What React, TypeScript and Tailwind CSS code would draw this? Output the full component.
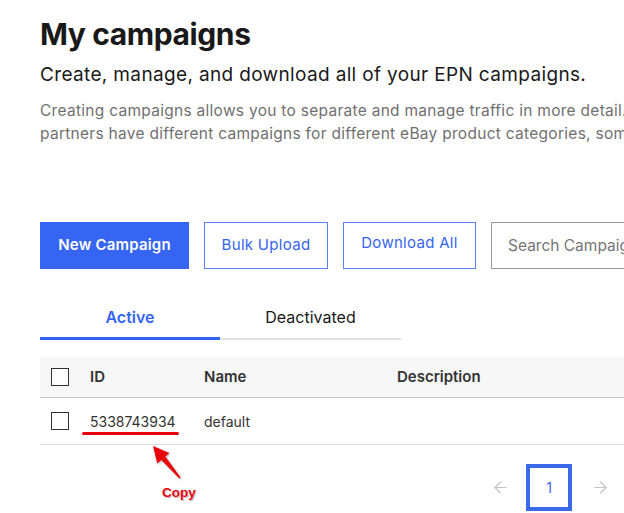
import { ArrowLeft, ArrowRight } from "lucide-react";

const font = { fontFamily: "Inter, 'Noto Sans', sans-serif" };

function Checkbox() {
  return <span className="block h-[18px] w-[18px] border-[1.5px] border-[#333] bg-white" />;
}

export default function App() {
  return (
    <div className="relative h-screen w-full overflow-hidden bg-white text-[#191919]" style={font}>
      <div className="w-[1000px] px-10 pt-4">
        {/* Header */}
        <h1 className="text-[30px] leading-9 font-bold tracking-[-0.4px] text-[#191919]">My campaigns</h1>
        <p className="mt-[11px] text-[19px] leading-6 tracking-[0.35px] text-[#191919]">
          Create, manage, and download all of your EPN campaigns.
        </p>
        <div className="mt-3 text-[15.5px] leading-[23px] tracking-[0.28px] whitespace-nowrap text-[#707070]">
          <span className="block">
            Creating campaigns allows you to separate and manage traffic in more detail. For example, some
          </span>
          <span className="block">
            partners have different campaigns for different eBay product categories, some for different sites.
          </span>
        </div>

        {/* Actions */}
        <div className="mt-[77px] flex gap-[15px]">
          <button className="h-[47px] w-[149px] bg-[#3665f3] text-[15px] font-semibold tracking-[0.2px] text-white">
            New Campaign
          </button>
          <button className="h-[47px] w-[124px] border border-[#5b82f2] text-[15px] tracking-[0.3px] text-[#3665f3]">
            Bulk Upload
          </button>
          <button className="h-[47px] w-[133px] border border-[#5b82f2] pb-1 text-[15px] tracking-[0.3px] text-[#3665f3]">
            Download All
          </button>
          <div className="flex h-[47px] w-[260px] items-center border border-[#999] px-4 text-[15.5px] text-[#767676]">
            Search Campaigns
          </div>
        </div>

        {/* Tabs */}
        <div className="mt-9 flex">
          <div className="w-[180px] border-b-[3px] border-[#3665f3] pb-2 text-center text-[16px] leading-6 font-semibold text-[#3665f3]">
            Active
          </div>
          <div className="w-[181px] border-b-2 border-[#e2e2e2] pb-[9px] text-center text-[16px] leading-6 text-[#191919]">
            Deactivated
          </div>
        </div>

        {/* Table */}
        <div className="mt-[17px] w-[900px]">
          <div className="flex h-[41px] items-center border-b border-[#c7c7c7] bg-[#f7f7f7] text-[15px] font-semibold text-[#333]">
            <div className="w-[50px] pl-[11px]">
              <Checkbox />
            </div>
            <div className="w-[114px]">ID</div>
            <div className="w-[193px]">Name</div>
            <div>Description</div>
          </div>
          <div className="flex h-[47px] items-center border-b border-[#dcdcdc] text-[14px] text-[#333]">
            <div className="w-[50px] pl-[11px]">
              <Checkbox />
            </div>
            <div className="w-[114px]">5338743934</div>
            <div className="w-[193px]">default</div>
            <div />
          </div>
        </div>

        {/* Pagination */}
        <div className="mt-[19px] ml-[451px] flex items-center">
          <ArrowLeft className="h-[19px] w-[19px] text-[#c4c4c4]" strokeWidth={1.5} />
          <div className="ml-[16px] flex h-[47px] w-[46px] items-center justify-center border-4 border-[#3a6ae8] text-[14px] text-[#3665f3]">
            1
          </div>
          <ArrowRight className="ml-[19px] h-[19px] w-[19px] text-[#c4c4c4]" strokeWidth={1.5} />
        </div>
      </div>

      {/* Annotation */}
      <span className="absolute top-[432px] left-[82px] h-[3px] w-[97px] rounded-full bg-[#e8000b]" />
      <svg
        className="absolute top-[440px] left-[145px] drop-shadow-[1px_1px_1px_rgba(0,0,0,0.3)]"
        width="45"
        height="45"
        viewBox="0 0 45 45"
      >
        <polygon points="8,6 24.4,13 12.2,23.4" fill="#e8000b" />
        <polygon points="16.3,20 20.3,16.4 35.6,37.5 34.4,38.5" fill="#e8000b" />
      </svg>
      <span
        className="absolute top-[483px] left-[162px] text-[13.5px] font-bold text-[#e8000b] [text-shadow:0_0_2px_#fff,1px_1px_1px_rgba(0,0,0,0.35)]"
        style={{ fontFamily: "'Liberation Sans', Arial, sans-serif" }}
      >
        Copy
      </span>
    </div>
  );
}
